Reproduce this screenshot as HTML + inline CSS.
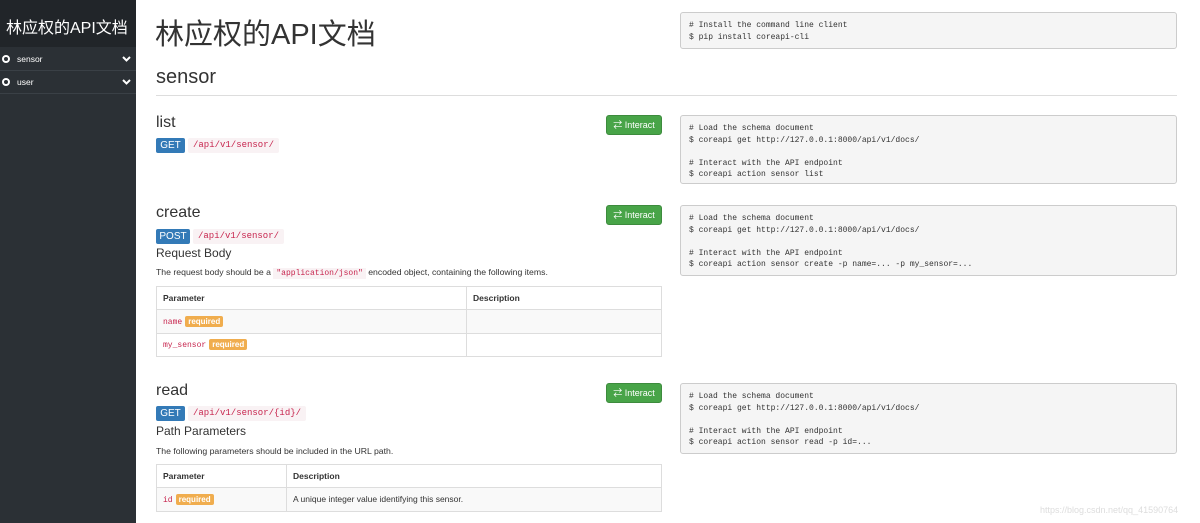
<!DOCTYPE html>
<html><head><meta charset="utf-8"><style>
*{margin:0;padding:0;box-sizing:border-box}
body{width:1200px;height:523px;overflow:hidden;background:#fff;font-family:"Liberation Sans","Noto Sans CJK SC",sans-serif;color:#333;position:relative}
.a{position:absolute;white-space:nowrap}
.side{left:0;top:0;width:136px;height:523px;background:#2b3035}
.shead{left:0;top:0;width:136px;height:47px;background:#212529}
.badge{position:absolute;height:15px;background:#337ab7;color:#fff;font-size:10px;line-height:15px;text-align:center;border-radius:2px}
.path{position:absolute;height:15px;background:#f9f2f4;color:#c7254e;font-size:9px;line-height:15px;padding:0 5px;font-family:"Liberation Mono",monospace;border-radius:2px}
.btn{position:absolute;width:56px;height:20px;background:#48a448;border:1px solid #3d8b3d;border-radius:3px;color:#fff;font-size:9px;line-height:18px;text-align:center}
.code{position:absolute;left:680px;width:497px;background:#f5f5f5;border:1px solid #ccc;border-radius:3px;font-family:"Liberation Mono",monospace;font-size:8px;line-height:11.5px;padding:7px 8px;white-space:pre;color:#333}
table{position:absolute;left:156px;width:506px;border-collapse:collapse;font-size:8.5px}
td,th{border:1px solid #ddd;text-align:left;padding:0 6px}
th{font-weight:bold;height:23px}
td{height:23.5px}
tr.g td{background:#f9f9f9}
.req{display:inline-block;background:#f0ad4e;color:#fff;font-size:8px;font-weight:bold;padding:1px 3px;border-radius:2px;margin-left:3px}
.c{color:#c7254e;font-family:"Liberation Mono",monospace;font-size:8px}
.h3{font-size:16px;color:#333}
.h4{font-size:12px;color:#333}
.p{font-size:8.7px;color:#333}
</style></head><body>
<div class="a side"></div><div class="a shead"></div>
<div class="a" style="left:6px;top:14px;color:#fff;font-size:16px">林应权的API文档</div>
<div class="a" style="left:0;top:70px;width:136px;height:1px;background:#3a4046"></div>
<div class="a" style="left:0;top:93px;width:136px;height:1px;background:#3a4046"></div>
<div class="a" style="left:2px;top:55px;width:8px;height:8px;border:2px solid #fff;border-radius:50%"></div>
<div class="a" style="left:2px;top:78px;width:8px;height:8px;border:2px solid #fff;border-radius:50%"></div>
<div class="a" style="left:17px;top:54px;color:#fff;font-size:8.5px">sensor</div>
<div class="a" style="left:17px;top:77px;color:#fff;font-size:8.5px">user</div>
<svg class="a" style="left:122px;top:56px" width="9" height="6"><path d="M1 1L4.5 4.5L8 1" stroke="#fff" stroke-width="2" fill="none"/></svg>
<svg class="a" style="left:122px;top:79px" width="9" height="6"><path d="M1 1L4.5 4.5L8 1" stroke="#fff" stroke-width="2" fill="none"/></svg>

<div class="a" style="left:155px;top:11px;font-size:29px;color:#333">林应权的API文档</div>
<div class="a" style="left:156px;top:66px;font-size:20px">sensor</div>
<div class="a" style="left:156px;top:95px;width:1021px;height:1px;background:#ddd"></div>

<div class="code" style="top:12px;height:37px"># Install the command line client
$ pip install coreapi-cli</div>

<div class="a h3" style="left:156px;top:114px">list</div>
<div class="badge" style="left:156px;top:138px;width:29px">GET</div>
<div class="path" style="left:188px;top:138px">/api/v1/sensor/</div>
<div class="btn" style="left:606px;top:115px">⇄ Interact</div>
<div class="code" style="top:115px;height:69px"># Load the schema document
$ coreapi get http://127.0.0.1:8000/api/v1/docs/

# Interact with the API endpoint
$ coreapi action sensor list</div>

<div class="a h3" style="left:156px;top:204px">create</div>
<div class="badge" style="left:156px;top:229px;width:34px">POST</div>
<div class="path" style="left:193px;top:229px">/api/v1/sensor/</div>
<div class="a h4" style="left:156px;top:246px">Request Body</div>
<div class="a p" style="left:156px;top:267px">The request body should be a <span class="c" style="background:#f9f2f4;padding:1px 3px">"application/json"</span> encoded object, containing the following items.</div>
<div class="btn" style="left:606px;top:205px">⇄ Interact</div>
<div class="code" style="top:205px;height:71px"># Load the schema document
$ coreapi get http://127.0.0.1:8000/api/v1/docs/

# Interact with the API endpoint
$ coreapi action sensor create -p name=... -p my_sensor=...</div>
<table style="top:286px"><tr><th style="width:310px">Parameter</th><th>Description</th></tr>
<tr class="g"><td><span class="c">name</span><span class="req">required</span></td><td></td></tr>
<tr><td><span class="c">my_sensor</span><span class="req">required</span></td><td></td></tr></table>

<div class="a h3" style="left:156px;top:382px">read</div>
<div class="badge" style="left:156px;top:406px;width:29px">GET</div>
<div class="path" style="left:188px;top:406px">/api/v1/sensor/{id}/</div>
<div class="a h4" style="left:156px;top:424px">Path Parameters</div>
<div class="a p" style="left:156px;top:446px">The following parameters should be included in the URL path.</div>
<div class="btn" style="left:606px;top:383px">⇄ Interact</div>
<div class="code" style="top:383px;height:71px"># Load the schema document
$ coreapi get http://127.0.0.1:8000/api/v1/docs/

# Interact with the API endpoint
$ coreapi action sensor read -p id=...</div>
<table style="top:464px"><tr><th style="width:130px">Parameter</th><th>Description</th></tr>
<tr class="g"><td><span class="c">id</span><span class="req">required</span></td><td>A unique integer value identifying this sensor.</td></tr></table>
<div class="a" style="left:1040px;top:505px;font-size:9px;color:#ddd">https://blog.csdn.net/qq_41590764</div>
</body></html>
